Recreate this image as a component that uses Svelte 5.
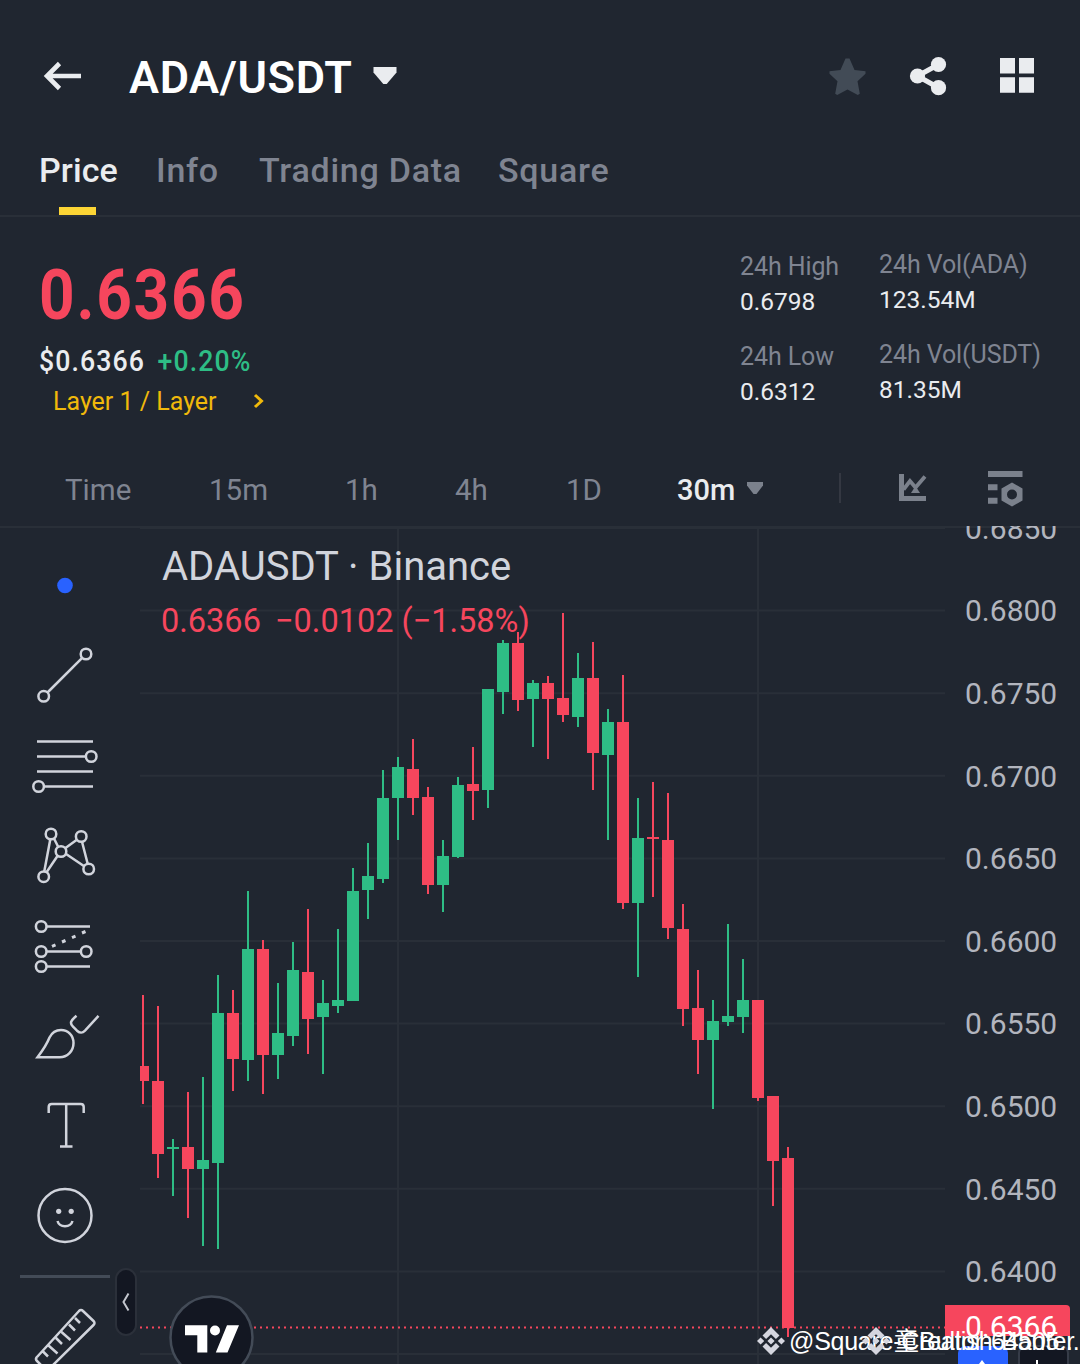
<script lang="ts">
  const tabs = ['Price', 'Info', 'Trading Data', 'Square'];

  const stats = [
    { label: '24h High', value: '0.6798' },
    { label: '24h Vol(ADA)', value: '123.54M' },
    { label: '24h Low', value: '0.6312' },
    { label: '24h Vol(USDT)', value: '81.35M' },
  ];

  const intervals = ['Time', '15m', '1h', '4h', '1D'];

  // one entry per 30m bar: direction, wick top, body top, body bottom, wick bottom
  const bars: [string, number, number, number, number][] = [
    ['down', 995, 1066, 1081, 1104],
    ['down', 1006, 1081, 1154, 1178],
    ['up', 1139, 1147, 1149, 1196],
    ['down', 1092, 1147, 1169, 1218],
    ['up', 1077, 1160, 1169, 1246],
    ['up', 975, 1013, 1163, 1249],
    ['down', 990, 1013, 1059, 1091],
    ['up', 891, 949, 1060, 1081],
    ['down', 940, 949, 1055, 1094],
    ['up', 983, 1033, 1055, 1079],
    ['up', 942, 970, 1036, 1046],
    ['down', 909, 972, 1019, 1054],
    ['up', 980, 1003, 1017, 1074],
    ['up', 929, 1000, 1006, 1013],
    ['up', 868, 891, 1001, 1001],
    ['up', 843, 876, 890, 919],
    ['up', 770, 798, 879, 883],
    ['up', 757, 767, 798, 840],
    ['down', 739, 769, 798, 815],
    ['down', 787, 797, 885, 894],
    ['up', 840, 856, 885, 912],
    ['up', 777, 785, 857, 858],
    ['down', 747, 784, 791, 820],
    ['up', 689, 689, 790, 808],
    ['up', 640, 643, 692, 714],
    ['down', 632, 643, 700, 711],
    ['up', 680, 683, 699, 747],
    ['down', 676, 683, 699, 759],
    ['down', 613, 698, 715, 722],
    ['up', 653, 678, 717, 727],
    ['down', 642, 678, 753, 790],
    ['up', 709, 722, 755, 840],
    ['down', 675, 722, 903, 909],
    ['up', 798, 838, 903, 977],
    ['down', 782, 837, 839, 897],
    ['down', 793, 840, 928, 939],
    ['down', 904, 929, 1009, 1026],
    ['down', 970, 1008, 1040, 1074],
    ['up', 1000, 1021, 1040, 1109],
    ['up', 924, 1016, 1022, 1026],
    ['up', 959, 1000, 1017, 1033],
    ['down', 1000, 1000, 1098, 1101],
    ['down', 1096, 1096, 1161, 1206],
    ['down', 1147, 1158, 1328, 1337],
  ];

  const levels = Array.from({ length: 11 }, (_, i) => ({
    price: (0.685 - i * 0.005).toFixed(4),
    y: 528 + i * 82.6,
  }));
</script>

<div class="screen">
  <header>
    <svg class="back" width="40" height="32" viewBox="0 0 40 32" fill="none" stroke="#eaecef">
      <path d="M17.500 3.500 5 16l12.500 12.500M6 16h33" stroke-width="4.600"/>
    </svg>
    <h1>ADA/USDT</h1>
    <svg class="caret" width="24" height="18" viewBox="0 0 24 18"><path d="M.5 0h23v5.500L13.700 17h-3.400L.5 5.500z" fill="#eaecef"/></svg>
    <div class="actions">
      <svg width="38" height="40" viewBox="0 0 38 40"><path d="M17.500 2.500h4l5 11.500 11 1.200v2.500l-8 7.600 2.300 12.500-2 1.200-10.300-5.500L9.200 39l-2-1.200 2.300-12.500-8-7.600v-2.500l11-1.200z" fill="#424b56"/></svg>
      <svg width="38" height="40" viewBox="0 0 38 40" fill="#eaecef">
        <path d="M29.500 8.500 8.500 20l21 11.700" fill="none" stroke="#eaecef" stroke-width="5"/>
        <circle cx="8.500" cy="20" r="7.600"/><circle cx="29.500" cy="8.500" r="7.600"/><circle cx="29.500" cy="31.700" r="7.600"/>
      </svg>
      <svg width="34" height="35" viewBox="0 0 34 35" fill="#eaecef">
        <path d="M0 0h15v15.500H0zM19 0h15v15.500H19zM0 19.200h15v15.500H0zM19 19.200h15v15.500H19z"/>
      </svg>
    </div>
  </header>

  <nav class="tabs">
    {#each tabs as tab, i}
      <span class="tab" class:active={i === 0}>{tab}</span>
    {/each}
  </nav>

  <section class="summary">
    <div class="quote">
      <div class="last">0.6366</div>
      <div class="fiat">$0.6366 <span class="change">+0.20%</span></div>
      <div class="tag">
        Layer 1 / Layer
        <svg width="12" height="16" viewBox="0 0 12 16"><path d="m2 2 6.500 6L2 14" fill="none" stroke="#f0b90b" stroke-width="3"/></svg>
      </div>
    </div>
    <div class="stats">
      {#each stats as s}
        <div class="stat">
          <span class="stat-label">{s.label}</span>
          <span class="stat-value">{s.value}</span>
        </div>
      {/each}
    </div>
  </section>

  <nav class="intervals">
    {#each intervals as label}
      <span class="interval">{label}</span>
    {/each}
    <span class="interval current">30m</span>
    <svg class="more" width="16" height="13" viewBox="0 0 16 13"><path d="M0 0h16v3.500L9.500 12h-3L0 3.500z" fill="#7b818c"/></svg>
    <span class="rule"></span>
    <svg class="chart-type" width="28" height="28" viewBox="0 0 28 28" fill="none" stroke="#7b818c">
      <path d="M2.500 0v24.500H27" stroke-width="5"/><path d="M4.500 15.500 11 7l5.500 6.500L26 2.500" stroke-width="3.800"/>
      <path d="m16.500 12 4.500 7h-9z" fill="#7b818c" stroke="none"/>
    </svg>
    <svg class="settings" width="35" height="36" viewBox="0 0 35 36" fill="#7b818c">
      <path d="M0 0h34.500v6H0zM0 13.200h9.500v6H0zM0 26.700h9.500v6H0z"/>
      <path fill-rule="evenodd" d="M24 11.500 34.500 17.500v12L24 35.500l-10.500-6v-12zM24 18.500a5 5 0 1 0 0 10 5 5 0 1 0 0-10z"/>
    </svg>
  </nav>

  <main>
    <aside class="tools">
      <svg viewBox="0 0 130 90"><circle cx="65" cy="45.500" r="7.800" fill="#2962ff"/></svg>
      <svg viewBox="0 0 130 90"><path d="m47.500 62.500 34.700-34.700"/><circle cx="43.700" cy="66.300" r="5.300"/><circle cx="86" cy="24" r="5.300"/></svg>
      <svg viewBox="0 0 130 90"><path d="M37 21.500h56M37 36.500h48.500M37 51.500h56M44 66.500h49"/><circle cx="91.200" cy="36.500" r="5.300"/><circle cx="38.600" cy="66.500" r="5.300"/></svg>
      <svg viewBox="0 0 130 90">
        <path d="m50.300 29.300-6 32M54 28.500l4 8M58 45.300 46.700 62M65.500 38l11-8M82 31.700l5.700 22M65.700 43.800l18.500 12.500"/>
        <circle cx="51" cy="24" r="5.300"/><circle cx="81.200" cy="26.500" r="5.300"/><circle cx="61" cy="41.500" r="5.300"/><circle cx="88.700" cy="59" r="5.300"/><circle cx="43.700" cy="66.700" r="5.300"/>
      </svg>
      <svg viewBox="0 0 130 90">
        <path d="M46.500 26.500H90M46.500 51.500H81M46.500 66.500H90"/>
        <path d="m52 46.300 3.500-1.500M62 42l3.500-1.500M72 37.700l3.500-1.500M82 33l3.500-1.500" stroke-width="3"/>
        <circle cx="41.200" cy="26.500" r="5.300"/><circle cx="41.200" cy="51.500" r="5.300"/><circle cx="86.200" cy="51.500" r="5.300"/><circle cx="41.200" cy="66.500" r="5.300"/>
      </svg>
      <svg viewBox="0 0 130 90">
        <path d="M37.500 67.300C43 60 47 54 49.500 47.500 52 42.500 56 40 61 40c7 0 12.500 5.500 12.500 13 0 8-6 14.300-14 14.300z"/>
        <path d="M76.500 25.700c-6 5-7 7.500-3.500 11l4 4c3.500 3 5.500 2.500 8 0l13.500-14.800"/>
      </svg>
      <svg viewBox="0 0 130 90"><path d="M48.700 33v-6q0-3 3-3h29q3 0 3 3v6M66.200 24v42.500M60 66.500h12.500"/></svg>
      <svg viewBox="0 0 130 90">
        <circle cx="65" cy="45.500" r="26.500"/><path d="M57.500 51c2 7 13 7 15 0"/>
        <g fill="#d1d4dc" stroke="none"><circle cx="58.700" cy="41.300" r="2.600"/><circle cx="71.200" cy="41.300" r="2.600"/></g>
      </svg>
      <span class="divider"></span>
      <svg class="ruler" viewBox="0 0 130 86">
        <path d="M37 76 79 30q2-2 4 0l10.500 10q2 2 0 4L49 88M37 76q-2 2 0 4l9 9M43 70.500l5 5M48.500 64.500l9 8M56 57l6 6M61.500 51l9 8M69 43.500l6 6M75 37l5 5"/>
      </svg>
    </aside>

    <svg class="plot" width="805" height="838" viewBox="140 526 805 838">
      <g stroke="#292f38" stroke-width="2">
        {#each levels as level}
          <path d="M140 {level.y}h805"/>
        {/each}
        <path d="M398 526v838M758 526v838"/>
      </g>
      {#each bars as [dir, high, top, bottom, low], i}
        <g class={dir}>
          <rect x={142 + i * 15} y={high} width="2" height={low - high}/>
          <rect x={137 + i * 15} y={top} width="12" height={bottom - top}/>
        </g>
      {/each}
      <path d="M140 1327.500h805" stroke="#f6465d" stroke-width="2" stroke-dasharray="2 4"/>
      <circle cx="211.500" cy="1337.500" r="41" fill="#131722" stroke="#434b57" stroke-width="2.500"/>
      <path d="M185 1325.300h22.300v27.300h-10v-17.300H185zM227 1325.300h12l-11.500 27.300h-11.700z" fill="#fff"/>
      <circle cx="215" cy="1330.500" r="5" fill="#fff"/>
    </svg>

    <svg class="axis" width="135" height="838" viewBox="945 526 135 838">
      {#each levels.slice(0, 10) as level}
        <text x="965" y={level.y + 10.7}>{level.price}</text>
      {/each}
      <path d="M945 1305h121q4 0 4 4v27H945z" fill="#f6465d"/>
      <text class="now" x="965" y="1337">0.6366</text>
      <rect x="958" y="1346" width="50" height="50" rx="7" fill="#2962ff"/>
      <rect x="1019" y="1346" width="49" height="50" rx="7" fill="#131722" stroke="#363c48" stroke-width="2"/>
      <path d="m979 1364 3-4 3 4zM1036 1360h2v4h-2z" fill="#fff"/>
    </svg>

    <div class="legend">
      <div class="symbol">ADAUSDT · Binance</div>
      <div class="delta">0.6366 <span>−0.0102 (−1.58%)</span></div>
    </div>
    <div class="handle">
      <svg width="8" height="20" viewBox="0 0 8 20"><path d="M6.500 1.500 1.500 10l5 8.500" fill="none" stroke="#c3c6ce" stroke-width="2"/></svg>
    </div>
    {#each ['@Square-Creator-64505...', '童Bullish-Banter'] as author, i}
      <div class="watermark" class:second={i === 1}>
        <svg width="28" height="28" viewBox="0 0 28 28" fill="#d5d6df">
          <path d="m14 0 8.500 8.500-3.600 3.600L14 7.200l-4.900 4.900-3.600-3.600zM14 28l8.500-8.500-3.600-3.600-4.900 4.900-4.900-4.900-3.600 3.600zM14 10.400l3.600 3.600-3.600 3.600-3.600-3.600zM3.600 10.400 7.200 14l-3.600 3.600L0 14zM24.400 10.400 28 14l-3.600 3.600-3.600-3.600z"/>
        </svg>
        {author}
      </div>
    {/each}
  </main>
</div>

<style>
  :global(body) { background: #202630; }

  .screen {
    width: 1080px; height: 1364px; overflow: hidden;
    display: flex; flex-direction: column;
    background: #202630; color: #eaecef;
    font-family: Roboto, sans-serif; white-space: nowrap;
  }

  /* Header */
  header { height: 152px; box-sizing: border-box; padding: 0 46px 1px 42px; display: flex; align-items: center; }
  .back { margin-right: 47px; }
  h1 { margin: 5px 0 0; width: 244px; font-size: 45px; line-height: 52px; font-weight: 600; letter-spacing: 0.6px; color: #fff; }
  .actions { margin-left: auto; display: flex; align-items: center; }
  .actions svg:nth-child(2) { margin: 0 53px 0 43px; }

  .tabs {
    height: 65px; box-sizing: border-box; padding-left: 39px;
    display: grid; grid-template-columns: 117px 103px 239px 1fr;
    border-bottom: 2px solid #292f38; font-size: 34px; line-height: 36px; font-weight: 500; color: #7f8491;
  }
  .tab { display: flex; flex-direction: column; justify-content: space-between; letter-spacing: 0.75px; }
  .tab.active { letter-spacing: 0.1px; color: #eaecef; }
  .tab.active::after { content: ''; width: 37px; height: 8px; margin-left: 20px; background: #fcd535; }

  /* Price and 24h numbers */
  .summary { height: 235px; display: flex; justify-content: space-between; }
  .quote { width: 300px; padding: 36px 0 0 39px; }
  .last {
    font-size: 71px; line-height: 84px; font-weight: 700; letter-spacing: 2px; color: #f6465d;
    transform: scaleX(0.875); transform-origin: left;
  }
  .fiat {
    margin-top: 6px; font-size: 29px; line-height: 36px; font-weight: 500; letter-spacing: 1.2px;
    transform: scaleX(0.92); transform-origin: left;
  }
  .change { margin-left: 5px; color: #2ebd85; }
  .tag { margin: 4px 0 0 14px; display: flex; align-items: center; gap: 36px; font-size: 25px; line-height: 38px; color: #f0b90b; }
  .tag svg { margin-bottom: 3px; }
  .stats { width: 340px; padding-top: 30px; display: grid; grid-template-columns: 139px 1fr; grid-auto-rows: 90px; }
  .stat { display: flex; flex-direction: column; line-height: 35px; }
  .stat:nth-child(odd) { padding-top: 2px; }
  .stat-label { font-size: 25px; letter-spacing: -0.1px; color: #7f8491; }
  .stat-value { font-size: 24.5px; }

  /* Interval bar */
  .intervals {
    height: 76px; box-sizing: border-box; border-bottom: 2px solid #292f38; flex-shrink: 0;
    padding: 1px 54px 0 65px; display: grid; align-items: center;
    grid-template-columns: 144px 136px 110px 111px 111px 70px 92px 60px 89px 1fr;
    font-size: 29.5px; color: #7f8491;
  }
  .current { font-size: 29px; font-weight: 500; color: #eaecef; }
  .more { margin-bottom: 3px; }
  .rule { width: 2px; height: 30px; background: #343842; margin-bottom: 3px; }
  .chart-type { margin-bottom: 4px; }
  .settings { margin-bottom: 1px; }

  /* Chart, pulled up so its top grid line meets the bar's border */
  main { position: relative; height: 838px; margin-top: -2px; display: flex; flex-shrink: 0; }
  .tools { width: 140px; padding-top: 14px; box-sizing: border-box; display: flex; flex-direction: column; flex-shrink: 0; }
  .tools svg { width: 130px; height: 90px; flex-shrink: 0; fill: none; stroke: #d1d4dc; stroke-width: 2.5; }
  .tools svg:first-child { stroke: none; }
  .divider { width: 90px; height: 3px; margin: 15px 0 3px 20px; flex-shrink: 0; background: #434b57; }
  .tools .ruler { height: 86px; }
  .plot, .axis { flex-shrink: 0; }
  .up { fill: #2ebd85; }
  .down { fill: #f6465d; }
  .axis text { font-size: 30px; fill: #b2b5be; }
  .axis .now { fill: #fff; }

  .legend { position: absolute; left: 161px; top: 15px; }
  .symbol { margin-left: 1px; font-size: 40px; line-height: 52px; color: #d1d4dc; }
  .delta { margin-top: 8px; font-size: 32.5px; line-height: 40px; color: #f6465d; }
  .delta span { margin-left: 6px; }
  .handle {
    position: absolute; left: 115px; top: 742px; width: 18px; height: 64px;
    display: flex; align-items: center; justify-content: center;
    background: #131722; border: 2px solid #2b303a; border-radius: 11px;
  }
  .watermark {
    position: absolute; left: 757px; bottom: 8px; display: flex; align-items: center; gap: 4px;
    font-family: "Liberation Sans", "Noto Sans CJK SC", sans-serif; font-size: 25px; line-height: 30px;
    letter-spacing: -0.25px; color: #fff;
  }
  .watermark.second { left: 862px; letter-spacing: 0; }
</style>
